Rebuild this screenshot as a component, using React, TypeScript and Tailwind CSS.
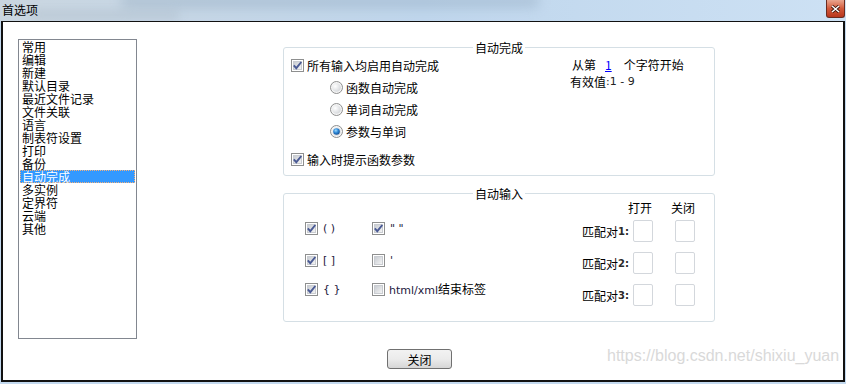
import React from "react";

const items = [
  "常用",
  "编辑",
  "新建",
  "默认目录",
  "最近文件记录",
  "文件关联",
  "语言",
  "制表符设置",
  "打印",
  "备份",
  "自动完成",
  "多实例",
  "定界符",
  "云端",
  "其他",
];

function CheckBox({ checked }: { checked: boolean }) {
  return (
    <svg width="13" height="13" viewBox="0 0 13 13" className="shrink-0">
      <defs>
        <linearGradient id="cbg" x1="0" y1="0" x2="1" y2="1">
          <stop offset="0" stopColor="#c6cad0" />
          <stop offset="1" stopColor="#f6f6f6" />
        </linearGradient>
      </defs>
      <rect x="0.5" y="0.5" width="12" height="12" fill="#fff" stroke="#8e8f8f" />
      <rect x="2.5" y="2.5" width="8" height="8" fill="url(#cbg)" stroke="#c9ccd1" />
      {checked && (
        <path d="M2.8 6.3 L5.3 9.2 L10.3 3" fill="none" stroke="#4a5a94" strokeWidth="1.9" />
      )}
    </svg>
  );
}

function Radio({ selected }: { selected: boolean }) {
  return (
    <svg width="13" height="13" viewBox="0 0 13 13" className="shrink-0">
      <defs>
        <radialGradient id="rbg" cx="0.35" cy="0.35" r="0.8">
          <stop offset="0" stopColor="#ffffff" />
          <stop offset="1" stopColor="#cfd2d6" />
        </radialGradient>
        <radialGradient id="rsel" cx="0.4" cy="0.35" r="0.7">
          <stop offset="0" stopColor="#9fdcff" />
          <stop offset="0.5" stopColor="#2d87d6" />
          <stop offset="1" stopColor="#124a8f" />
        </radialGradient>
      </defs>
      <circle cx="6.5" cy="6.5" r="6" fill="#f5f5f5" stroke="#8e8f8f" />
      <circle cx="6.5" cy="6.5" r="4.3" fill="url(#rbg)" />
      {selected && <circle cx="6.5" cy="6.5" r="3.3" fill="url(#rsel)" />}
    </svg>
  );
}

function Group({ title, className, children }: { title: string; className: string; children: React.ReactNode }) {
  return (
    <div className={`relative w-[432px] rounded-[3px] border border-[#d5dfe5] ${className}`}>
      <span className="absolute left-1/2 -top-[7px] -translate-x-1/2 bg-white px-[2px]">{title}</span>
      {children}
    </div>
  );
}

export default function App() {
  return (
    <div className="w-[846px] h-[384px] overflow-hidden bg-[#c3d9ef] font-['Noto_Sans_CJK_SC',sans-serif] text-[12px] leading-[13px] text-black">
      {/* title bar */}
      <div className="relative flex h-[21px] items-start justify-between overflow-hidden bg-gradient-to-r from-[#cad6e0] via-[#bfd6ec] to-[#cde1f4]">
        <div className="absolute left-[120px] top-[-6px] h-[14px] w-[420px] rounded-full bg-[#8fa6bc] opacity-40 blur-[6px]" />
        <div className="absolute left-[30px] top-[10px] h-[10px] w-[150px] rounded-full bg-[#a9b8c6] opacity-40 blur-[5px]" />
        <span className="relative pl-[2px] pt-[3px]">首选项</span>
        <div className="relative mr-[1px] flex h-[18px] w-[19px] items-center justify-center rounded-b-[3px] border border-t-0 border-[#6a2c20] bg-gradient-to-b from-[#e9a58e] via-[#d2593a] to-[#b8361c]">
          <svg width="9" height="8" viewBox="0 0 9 8">
            <path d="M1 1 L8 7 M8 1 L1 7" stroke="#3a1208" strokeWidth="3" />
            <path d="M1 1 L8 7 M8 1 L1 7" stroke="#ffffff" strokeWidth="1.5" />
          </svg>
        </div>
      </div>

      {/* window body */}
      <div className="ml-px flex h-[361px] w-[844px] flex-col border-x-2 border-b-2 border-t border-[#111] bg-white">
        <div className="flex pl-[15px] pt-[17px]">
          <div className="h-[300px] w-[119px] shrink-0 border border-[#828790]">
            {items.map((it) => (
              <div
                key={it}
                className={
                  it === "自动完成"
                    ? "mx-px h-[13px] bg-[#3399ff] pl-[2px] text-white outline-1 outline-dotted outline-[#f5b07a] -outline-offset-1"
                    : "mx-px h-[13px] pl-[2px]"
                }
              >
                {it}
              </div>
            ))}
          </div>

          <div className="ml-[146px] mt-[8px] flex flex-col">
            <Group title="自动完成" className="h-[129px]">
              <div className="flex pl-[7px] pt-[6px]">
                <div className="flex w-[279px] flex-col">
                  <div className="flex h-[22px] items-center gap-[3px]">
                    <CheckBox checked />
                    <span>所有输入均启用自动完成</span>
                  </div>
                  {["函数自动完成", "单词自动完成", "参数与单词"].map((r, i) => (
                    <div key={r} className="ml-[39px] flex h-[22px] items-center gap-[3px]">
                      <Radio selected={i === 2} />
                      <span>{r}</span>
                    </div>
                  ))}
                  <div className="mt-[6px] flex h-[22px] items-center gap-[3px]">
                    <CheckBox checked />
                    <span>输入时提示函数参数</span>
                  </div>
                </div>
                <div className="flex flex-col pt-[4px]">
                  <div className="flex h-[13px] pl-[2px]">
                    <span>从第</span>
                    <span className="ml-[9px] text-[#0000ff] underline">1</span>
                    <span className="ml-[12px]">个字符开始</span>
                  </div>
                  <div className="mt-[4px] flex h-[13px]">
                    <span>有效值</span>
                    <span className="font-['DejaVu_Sans',sans-serif] text-[11px] text-[#222]">:1 - 9</span>
                  </div>
                </div>
              </div>
            </Group>

            <Group title="自动输入" className="mt-[17px] h-[129px]">
              <div className="flex">
                <div className="flex flex-col pl-[21px] pt-[28px] font-['DejaVu_Sans',sans-serif] text-[11px] text-[#1e2040]">
                  <div className="flex h-[13px] items-center">
                    <div className="flex w-[67px] items-center gap-[5px]">
                      <CheckBox checked />
                      <span>( )</span>
                    </div>
                    <div className="flex items-center gap-[5px]">
                      <CheckBox checked />
                      <span>" "</span>
                    </div>
                  </div>
                  <div className="mt-[19px] flex h-[13px] items-center">
                    <div className="flex w-[67px] items-center gap-[5px]">
                      <CheckBox checked />
                      <span>[ ]</span>
                    </div>
                    <div className="flex items-center gap-[5px]">
                      <CheckBox checked={false} />
                      <span>'</span>
                    </div>
                  </div>
                  <div className="mt-[16px] flex h-[13px] items-center">
                    <div className="flex w-[67px] items-center gap-[5px]">
                      <CheckBox checked />
                      <span>{"{ }"}</span>
                    </div>
                    <div className="flex items-center gap-[4px]">
                      <CheckBox checked={false} />
                      <span>
                        html/xml
                        <span className="font-['Noto_Sans_CJK_SC',sans-serif] text-[12px] text-black">结束标签</span>
                      </span>
                    </div>
                  </div>
                </div>

                <div className="ml-auto flex flex-col pr-[19px] pt-[7px]">
                  <div className="flex h-[13px]">
                    <span className="ml-[48px] whitespace-nowrap">打开</span>
                    <span className="ml-[19px] whitespace-nowrap">关闭</span>
                  </div>
                  {[1, 2, 3].map((n, i) => (
                    <div key={n} className={`flex h-[22px] items-center ${i === 0 ? "mt-[6px]" : "mt-[10px]"}`}>
                      <span className="flex w-[49px] shrink-0 items-center justify-end whitespace-nowrap">
                        匹配对
                        <span className="font-['DejaVu_Sans',sans-serif] text-[10px] font-bold text-[#2a2a2a]">{n}:</span>
                      </span>
                      <div className="ml-[4px] h-[22px] w-[20px] rounded-[2px] border border-[#d3d7dc]" />
                      <div className="ml-[22px] h-[22px] w-[20px] rounded-[2px] border border-[#d3d7dc]" />
                    </div>
                  ))}
                </div>
              </div>
            </Group>
          </div>
        </div>

        <div className="mt-[10px] flex items-start pl-[384px]">
          <button className="flex h-[20px] w-[65px] items-center justify-center rounded-[3px] border border-[#707070] bg-gradient-to-b from-[#f2f2f2] via-[#ebebeb] to-[#d6d6d6]">
            关闭
          </button>
          <span className="ml-[155px] -mt-[2px] font-['Liberation_Sans',sans-serif] text-[16px] leading-[18px] text-[#d9d9d9]">
            https://blog.csdn.net/shixiu_yuan
          </span>
        </div>
      </div>
    </div>
  );
}
